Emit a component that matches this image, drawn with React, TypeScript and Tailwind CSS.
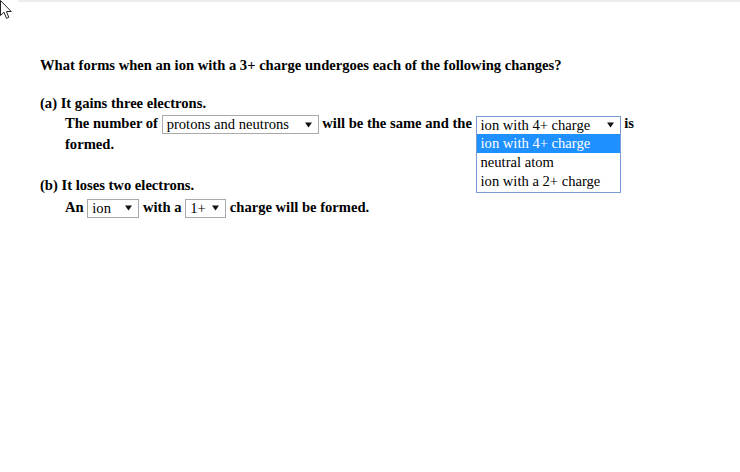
import React from "react";

function Arrow() {
  return (
    <svg width="7" height="6" viewBox="0 0 7 6" className="shrink-0">
      <path d="M0 0.5 L7 0.5 L3.5 5.5 Z" fill="#111" />
    </svg>
  );
}

function FakeSelect({
  value,
  width,
  focused,
}: {
  value: string;
  width: string;
  focused?: boolean;
}) {
  return (
    <span
      className={`inline-flex items-center justify-between h-[19px] align-middle bg-white border pl-[4px] pr-[6px] font-normal leading-none ${width} ${
        focused ? "border-[#7a9cd3]" : "border-[#a9a9a9]"
      }`}
    >
      <span className="whitespace-nowrap">{value}</span>
      <Arrow />
    </span>
  );
}

export default function App() {
  const options = ["ion with 4+ charge", "neutral atom", "ion with a 2+ charge"];

  return (
    <div className="relative w-[740px] h-[472px] bg-white overflow-hidden font-['Liberation_Serif','Times_New_Roman',serif] text-[14.6px] text-black">
      <div className="h-[2px] ml-[18px] bg-[#ededed]" />

      {/* mouse pointer */}
      <svg
        width="14"
        height="20"
        viewBox="0 0 14 20"
        className="absolute left-0 top-0"
      >
        <path
          d="M0.5 0.5 L0.5 15.5 L4 12.2 L6.5 18.3 L8.8 17.3 L6.4 11.5 L11.2 11.5 Z"
          fill="#fff"
          stroke="#222"
          strokeWidth="1"
          strokeLinejoin="round"
        />
      </svg>

      <div className="pl-[40px] pt-[55px] font-bold">
        <p className="leading-[17px]">
          What forms when an ion with a 3+ charge undergoes each of the following changes?
        </p>

        <p className="mt-[21px] leading-[17px]">(a) It gains three electrons.</p>
        <div className="pl-[25px] mt-[2px] w-[640px] leading-[18px]">
          The number of <FakeSelect value="protons and neutrons" width="w-[157px]" /> will be the
          same and the{" "}
          <span className="relative inline-block align-middle">
            <FakeSelect value="ion with 4+ charge" width="w-[145px]" focused />
            <span className="absolute left-0 top-[19px] w-[145px] bg-white border border-[#7a9cd3] border-t-0 font-normal z-10 pb-[1px]">
              {options.map((o, i) => (
                <span
                  key={o}
                  className={`block h-[19px] leading-[19px] pl-[4px] whitespace-nowrap ${
                    i === 0 ? "bg-[#1e90ff] text-white" : "text-black"
                  }`}
                >
                  {o}
                </span>
              ))}
            </span>
          </span>{" "}
          is formed.
        </div>

        <p className="mt-[24px] leading-[17px]">(b) It loses two electrons.</p>
        <div className="pl-[25px] mt-[4px] leading-[18px]">
          An <FakeSelect value="ion" width="w-[52px]" /> with a{" "}
          <FakeSelect value="1+" width="w-[41px]" /> charge will be formed.
        </div>
      </div>
    </div>
  );
}
